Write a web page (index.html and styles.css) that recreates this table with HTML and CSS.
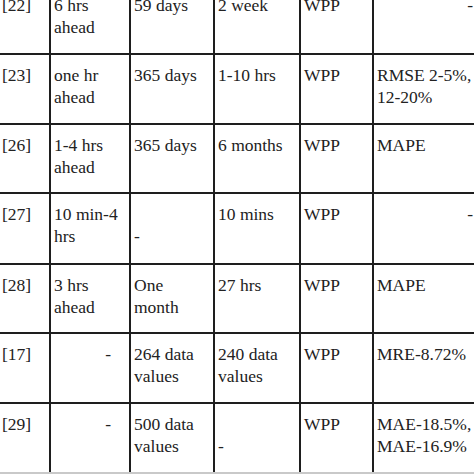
FILE: index.html
```html
<!DOCTYPE html>
<html>
<head>
<meta charset="utf-8">
<link rel="stylesheet" href="styles.css">
</head>
<body>
<div class="frame">
  <div class="sheet">
    <div class="c">[22]</div><div class="c">6 hrs<br>ahead</div><div class="c">59 days</div><div class="c">2 week</div><div class="c">WPP</div><div class="c r">-</div>
    <div class="c">[23]</div><div class="c">one hr<br>ahead</div><div class="c">365 days</div><div class="c">1-10 hrs</div><div class="c">WPP</div><div class="c">RMSE 2-5%,<br>12-20%</div>
    <div class="c">[26]</div><div class="c">1-4 hrs<br>ahead</div><div class="c">365 days</div><div class="c">6 months</div><div class="c">WPP</div><div class="c">MAPE</div>
    <div class="c">[27]</div><div class="c">10 min-4<br>hrs</div><div class="c">&nbsp;<br>-</div><div class="c">10 mins</div><div class="c">WPP</div><div class="c r">-</div>
    <div class="c">[28]</div><div class="c">3 hrs<br>ahead</div><div class="c">One<br>month</div><div class="c">27 hrs</div><div class="c">WPP</div><div class="c">MAPE</div>
    <div class="c">[17]</div><div class="c r">-</div><div class="c">264 data<br>values</div><div class="c">240 data<br>values</div><div class="c">WPP</div><div class="c">MRE-8.72%</div>
    <div class="c">[29]</div><div class="c r">-</div><div class="c">500 data<br>values</div><div class="c">&nbsp;<br>-</div><div class="c">WPP</div><div class="c">MAE-18.5%,<br>MAE-16.9%</div>
  </div>
</div>
</body>
</html>
```
FILE: styles.css
```css
html, body {
  margin: 0;
  padding: 0;
  background: #c9c9c9;
}
.frame {
  width: 474px;
  height: 472px;
  overflow: hidden;
  background: #fff;
}
.sheet {
  display: grid;
  grid-template-columns: 49px 78px 82px 84px 71px 130px;
  grid-template-rows: 68px 68px 67px 69px 67px 68px 70px;
  gap: 2px;
  background: #1e1e1e;
  margin-top: -15px;
  width: max-content;
  font-family: "Liberation Serif", "Times New Roman", serif;
  font-size: 17.5px;
  line-height: 21.5px;
  color: #222;
}
.c {
  background: #fff;
  padding: 10px 2px 0 3px;
  white-space: nowrap;
}
.c:nth-child(6n+1) {
  padding-left: 2px;
}
.r {
  text-align: right;
  padding-right: 18px;
}
.c:nth-child(6n).r {
  padding-right: 31px;
}
```
